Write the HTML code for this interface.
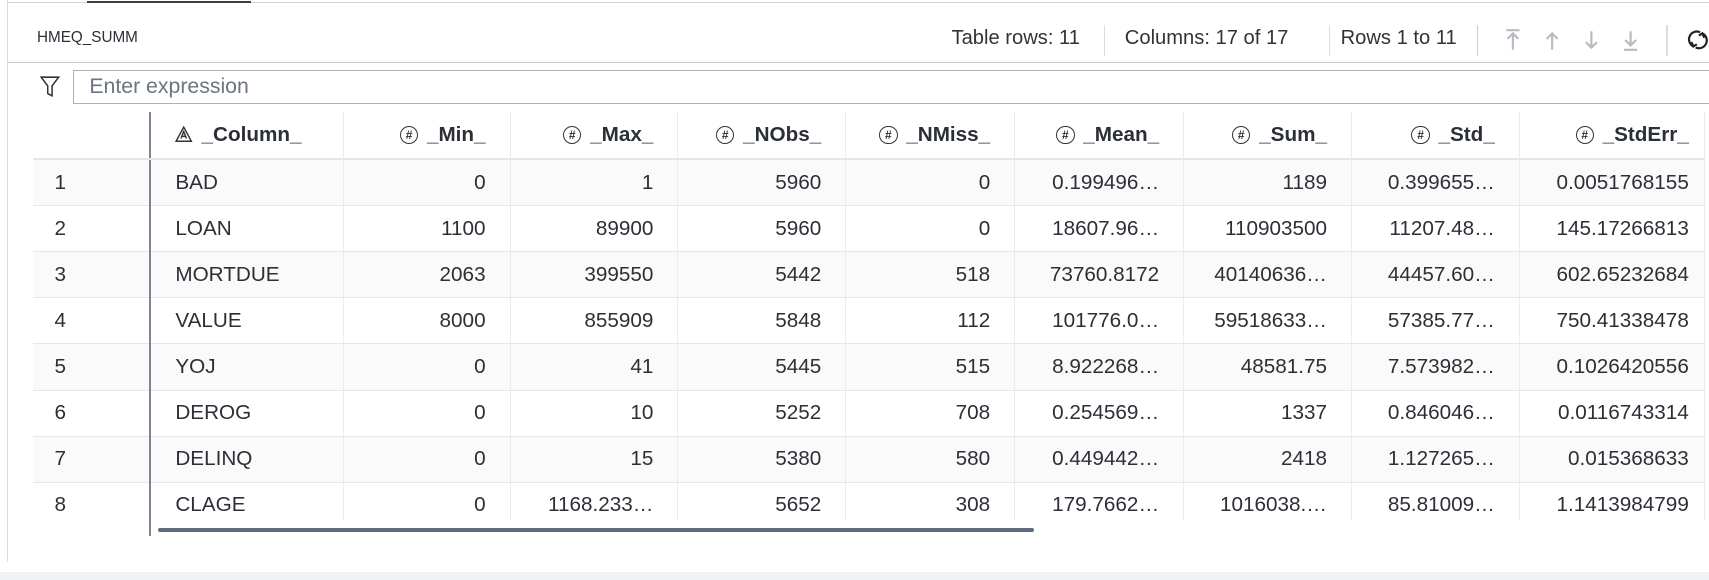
<!DOCTYPE html>
<html><head><meta charset="utf-8"><style>
html,body{margin:0;padding:0;background:#fff;overflow:hidden}
body{width:1709px;height:580px}
#p{width:1568px;height:532px;position:relative;zoom:1.08992;font-family:"Liberation Sans",sans-serif;color:#2b2f36}
.abs{position:absolute}
.t{font-size:18.5px;white-space:nowrap;color:#333}
table{border-collapse:collapse;position:absolute;left:30px;top:103px;table-layout:fixed}
td,th{height:41.4px;padding:0 22px 0 16px;font-size:19px;border-right:1px solid #ececec;border-bottom:1px solid #e6e6e6;white-space:nowrap;overflow:hidden;text-align:right;color:#2b2f36}
th{font-weight:bold;height:42px;border-bottom:2px solid #e6e6e6;font-size:19px}
td:first-child,th:first-child{text-align:left;padding-left:20px;border-right:2px solid #7d8794}
td:nth-child(2),th:nth-child(2){text-align:left;padding-left:22px}
td:last-child,th:last-child{padding-right:14px}
tr.o td{background:#fafafa}
.ic{display:inline-block;width:15px;height:15px;border:1.5px solid #333;border-radius:50%;font-size:11px;line-height:15px;text-align:center;font-weight:bold;vertical-align:2px;margin-right:8px}
</style></head><body><div id="p">
<div class="abs" style="left:6px;top:0;width:1px;height:515px;background:#ddd"></div>
<div class="abs" style="left:7px;top:2px;width:1561px;height:1px;background:#cfd3da"></div>
<div class="abs" style="left:80px;top:1px;width:150px;height:2px;background:#3a3f47"></div>
<div class="abs" style="left:34px;top:27px;font-size:14px">HMEQ_SUMM</div>
<div class="abs t" style="left:873px;top:25px">Table rows: 11</div>
<div class="abs" style="left:1013px;top:23px;width:1px;height:28px;background:#ddd"></div>
<div class="abs t" style="left:1032px;top:25px">Columns: 17 of 17</div>
<div class="abs" style="left:1219px;top:23px;width:1px;height:28px;background:#ddd"></div>
<div class="abs t" style="left:1230px;top:25px">Rows 1 to 11</div>
<div class="abs" style="left:1355px;top:23px;width:1px;height:28px;background:#ccc"></div>
<svg class="abs" style="left:1378px;top:26px" width="130" height="22" stroke="#b8bcc2" stroke-width="2" fill="none">
<path d="M4 2h12M10 5v15M5 10l5-5 5 5"/><path d="M46 5v15M41 10l5-5 5 5"/><path d="M82 3v15M77 13l5 5 5-5"/><path d="M118 3v13M113 11l5 5 5-5M112 20h12"/></svg>
<div class="abs" style="left:1529px;top:23px;width:1px;height:28px;background:#ddd"></div>
<svg class="abs" style="left:1548px;top:27px" width="20" height="20" stroke="#222" stroke-width="2" fill="none"><path d="M12 3a7 7 0 0 0-6 13M8 17a7 7 0 0 0 6-13"/><path d="M4 12l2 4 3-2M16 8l-2-4-3 2"/></svg>
<div class="abs" style="left:7px;top:57px;width:1561px;height:1px;background:#c7ccd3"></div>
<svg class="abs" style="left:36px;top:69px" width="20" height="22" stroke="#333" stroke-width="1.4" fill="none"><path d="M2 2h16l-6 8v9l-4-2v-7z"/></svg>
<div class="abs" style="left:67px;top:64px;width:1510px;height:30px;border:1px solid #aab3c0"></div>
<div class="abs" style="left:82px;top:68px;font-size:19.5px;color:#6b7480">Enter expression</div>
<table>
<colgroup><col style="width:108px"><col style="width:177px"><col style="width:153px"><col style="width:154px"><col style="width:154px"><col style="width:155px"><col style="width:155px"><col style="width:154px"><col style="width:154px"><col style="width:170px"></colgroup>
<tr><th></th><th><svg width="16" height="15" style="margin-right:8px;vertical-align:-1px" fill="none" stroke="#333" stroke-width="1.3"><path d="M8 1L1 14h14z"/><path d="M5.5 11.5L8 5l2.5 6.5M6.3 9.5h3.4"/></svg>_Column_</th><th><span class="ic">#</span>_Min_</th><th><span class="ic">#</span>_Max_</th><th><span class="ic">#</span>_NObs_</th><th><span class="ic">#</span>_NMiss_</th><th><span class="ic">#</span>_Mean_</th><th><span class="ic">#</span>_Sum_</th><th><span class="ic">#</span>_Std_</th><th><span class="ic">#</span>_StdErr_</th></tr>
<tr class="o"><td>1</td><td>BAD</td><td>0</td><td>1</td><td>5960</td><td>0</td><td>0.199496…</td><td>1189</td><td>0.399655…</td><td>0.0051768155</td></tr>
<tr><td>2</td><td>LOAN</td><td>1100</td><td>89900</td><td>5960</td><td>0</td><td>18607.96…</td><td>110903500</td><td>11207.48…</td><td>145.17266813</td></tr>
<tr class="o"><td>3</td><td>MORTDUE</td><td>2063</td><td>399550</td><td>5442</td><td>518</td><td>73760.8172</td><td>40140636…</td><td>44457.60…</td><td>602.65232684</td></tr>
<tr><td>4</td><td>VALUE</td><td>8000</td><td>855909</td><td>5848</td><td>112</td><td>101776.0…</td><td>59518633…</td><td>57385.77…</td><td>750.41338478</td></tr>
<tr class="o"><td>5</td><td>YOJ</td><td>0</td><td>41</td><td>5445</td><td>515</td><td>8.922268…</td><td>48581.75</td><td>7.573982…</td><td>0.1026420556</td></tr>
<tr><td>6</td><td>DEROG</td><td>0</td><td>10</td><td>5252</td><td>708</td><td>0.254569…</td><td>1337</td><td>0.846046…</td><td>0.0116743314</td></tr>
<tr class="o"><td>7</td><td>DELINQ</td><td>0</td><td>15</td><td>5380</td><td>580</td><td>0.449442…</td><td>2418</td><td>1.127265…</td><td>0.015368633</td></tr>
<tr><td style="border-bottom:none">8</td><td style="border-bottom:none">CLAGE</td><td style="border-bottom:none">0</td><td style="border-bottom:none">1168.233…</td><td style="border-bottom:none">5652</td><td style="border-bottom:none">308</td><td style="border-bottom:none">179.7662…</td><td style="border-bottom:none">1016038.…</td><td style="border-bottom:none">85.81009…</td><td style="border-bottom:none">1.1413984799</td></tr>
</table>
<div class="abs" style="left:0;top:477px;width:1568px;height:40px;background:#fff"></div>
<div class="abs" style="left:6px;top:476px;width:1px;height:40px;background:#ddd"></div>
<div class="abs" style="left:137px;top:476px;width:2px;height:16px;background:#7d8794"></div>
<div class="abs" style="left:145px;top:484px;width:804px;height:4px;border-radius:2px;background:#5f6b7c"></div>
<div class="abs" style="left:0;top:525px;width:1568px;height:7px;background:#f1f2f4"></div>
</div></body></html>
